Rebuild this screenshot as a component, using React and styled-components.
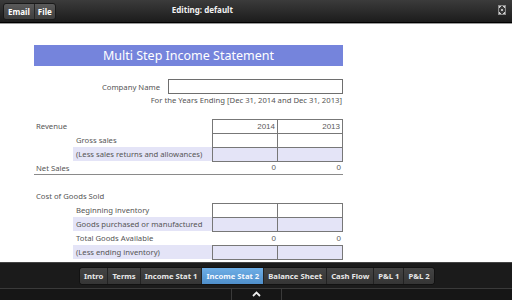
import styled, { createGlobalStyle } from 'styled-components';

const Global = createGlobalStyle`
  html, body {
    margin: 0;
    padding: 0;
    background: #fff;
  }
  body {
    font-family: "Noto Sans", "Open Sans", sans-serif;
  }
`;

const Screen = styled.div`
  width: 512px;
  height: 300px;
  display: flex;
  flex-direction: column;
  overflow: hidden;
`;

const TopBar = styled.header`
  height: 22px;
  flex-shrink: 0;
  display: flex;
  align-items: center;
  padding: 0 3px;
  background: linear-gradient(#3b3b3b, #1c1c1c);
  border-bottom: 1px solid #000;
  box-shadow: 0 1px 0 #9a9a9a;
`;

const ButtonGroup = styled.div`
  display: flex;
  height: 15px;
  margin-top: 1px;
  border-radius: 3px;
  overflow: hidden;
  background: linear-gradient(#5a5a5a, #3e3e3e);
  border: 1px solid #1a1a1a;
`;

const BarButton = styled.span`
  display: flex;
  align-items: center;
  padding: 0 ${(p) => p.$pad}px;
  color: #fff;
  font-size: 8px;
  font-weight: 700;
  & + & {
    border-left: 1px solid #262626;
  }
`;

const Editing = styled.div`
  margin-left: 116px;
  color: #f2f2f2;
  font-size: 8px;
  font-weight: 700;
  margin-top: -4px;
  flex: 1;
`;

const FullIcon = styled.svg`
  width: 8px;
  height: 10px;
  margin-right: 3px;
  margin-top: -3px;
`;

const Content = styled.main`
  flex: 1;
  min-height: 0;
  overflow: hidden;
  margin-top: 1px;
  background: #fff;
  padding: 21px 0 0 34px;
  color: #555;
  font-size: 7.7px;
`;

const Sheet = styled.div`
  width: 309px;
`;

const Title = styled.h1`
  margin: 0;
  height: 21px;
  background: #7584dc;
  color: #fff;
  font-size: 12.5px;
  font-weight: 400;
  display: flex;
  align-items: center;
  justify-content: center;
`;

const CompanyRow = styled.div`
  display: flex;
  justify-content: flex-end;
  align-items: center;
  margin-top: 13px;
  gap: 8px;
`;

const Input = styled.div`
  width: 173px;
  height: 13px;
  border: 1px solid #6e6e6e;
`;

const Period = styled.div`
  text-align: right;
  padding-right: 1px;
  line-height: 12px;
`;

const Grid = styled.div`
  margin-top: 13px;
  display: grid;
  grid-template-columns: 39px 140px 65px 65px;
  grid-auto-rows: 14px;
`;

const Label = styled.div`
  grid-column: ${(p) => (p.$indent ? '2' : '1 / 3')};
  display: flex;
  align-items: center;
  padding-left: ${(p) => (p.$indent ? 3 : 2)}px;
  background: ${(p) => (p.$shade ? '#e4e4f7' : 'transparent')};
  border-bottom: ${(p) => (p.$line ? '1px solid #8a8a8a' : 'none')};
  white-space: nowrap;
`;

const Cell = styled.div`
  display: flex;
  align-items: center;
  justify-content: flex-end;
  padding-right: 2px;
  font-family: "Liberation Sans", Arial, sans-serif;
  font-size: 8px;
  color: #5a5a5a;
  background: ${(p) => (p.$shade ? '#e4e4f7' : 'transparent')};
  border: ${(p) => (p.$boxed ? '1px solid #777' : 'none')};
  border-bottom: ${(p) => (p.$line ? '1px solid #8a8a8a' : p.$boxed ? '1px solid #777' : 'none')};
  margin: ${(p) => (p.$boxed ? '0 0 -1px -1px' : '0')};
`;

const BottomBar = styled.footer`
  height: 37px;
  flex-shrink: 0;
  background: #1b1b1b;
  border-top: 1px solid #444;
  display: flex;
  flex-direction: column;
`;

const TabRow = styled.nav`
  height: 25px;
  flex-shrink: 0;
  display: flex;
  align-items: center;
  padding-left: 80px;
  border-bottom: 1px solid #3a3a3a;
`;

const Tabs = styled.div`
  display: flex;
  height: 16px;
  border-radius: 3px;
  overflow: hidden;
  background: #3a3a3a;
  box-shadow: 0 0 0 1px #121212;
`;

const Tab = styled.span`
  display: flex;
  align-items: center;
  padding: 0 ${(p) => p.$pad}px;
  font-size: 7.7px;
  font-weight: 700;
  color: ${(p) => (p.$active ? '#f4f8ff' : '#e8e8e8')};
  background: ${(p) =>
    p.$active ? 'linear-gradient(#6eaee6, #4f8fcb)' : 'linear-gradient(#444, #353535)'};
  & + & {
    border-left: 1px solid #222;
  }
`;

const Handle = styled.div`
  flex: 1;
  display: flex;
  justify-content: center;
  background: #161616;
`;

const HandleCell = styled.div`
  width: 49px;
  border-left: 1px solid #3a3a3a;
  border-right: 1px solid #3a3a3a;
  display: flex;
  justify-content: center;
  padding-top: 2px;
`;

const tabs = [
  ['Intro', 4],
  ['Terms', 4],
  ['Income Stat 1', 4],
  ['Income Stat 2', 4, true],
  ['Balance Sheet', 4],
  ['Cash Flow', 4],
  ['P&L 1', 4],
  ['P&L 2', 4],
];

const rows = [
  { label: 'Revenue', cells: ['2014', '2013'], boxed: true },
  { label: 'Gross sales', indent: true, cells: ['', ''], boxed: true },
  { label: '(Less sales returns and allowances)', indent: true, shade: true, cells: ['', ''], boxed: true },
  { label: 'Net Sales', cells: ['0', '0'], line: true },
  { label: '', cells: ['', ''] },
  { label: 'Cost of Goods Sold', cells: ['', ''] },
  { label: 'Beginning inventory', indent: true, cells: ['', ''], boxed: true },
  { label: 'Goods purchased or manufactured', indent: true, shade: true, cells: ['', ''], boxed: true },
  { label: 'Total Goods Available', indent: true, cells: ['0', '0'] },
  { label: '(Less ending inventory)', indent: true, shade: true, cells: ['', ''], boxed: true },
];

export default function App() {
  return (
    <Screen>
      <Global />
      <TopBar>
        <ButtonGroup>
          <BarButton $pad={4}>Email</BarButton>
          <BarButton $pad={3}>File</BarButton>
        </ButtonGroup>
        <Editing>Editing: default</Editing>
        <FullIcon viewBox="0 0 8 10">
          <rect x="0" y="0" width="8" height="10" fill="#8a8a8a" />
          <rect x="1" y="1" width="6" height="8" fill="#3a3a3a" />
          <path d="M1 1h2v1H2v1H1zM7 1H5v1h1v1h1zM1 9h2V8H2V7H1zM7 9H5V8h1V7h1z" fill="#d0d0d0" />
          <rect x="3" y="4" width="2" height="2" fill="#bbb" />
        </FullIcon>
      </TopBar>
      <Content>
        <Sheet>
          <Title>Multi Step Income Statement</Title>
          <CompanyRow>
            <span>Company Name</span>
            <Input />
          </CompanyRow>
          <Period>For the Years Ending [Dec 31, 2014 and Dec 31, 2013]</Period>
          <Grid>
            {rows.map((r, i) => [
              r.indent && <div key={`i${i}`} />,
              <Label key={`l${i}`} $indent={r.indent} $shade={r.shade} $line={r.line}>
                {r.label}
              </Label>,
              ...r.cells.map((c, j) => (
                <Cell key={`c${i}${j}`} $shade={r.shade} $boxed={r.boxed} $line={r.line}>
                  {c}
                </Cell>
              )),
            ])}
          </Grid>
        </Sheet>
      </Content>
      <BottomBar>
        <TabRow>
          <Tabs>
            {tabs.map(([name, pad, active]) => (
              <Tab key={name} $pad={pad} $active={active}>
                {name}
              </Tab>
            ))}
          </Tabs>
        </TabRow>
        <Handle>
          <HandleCell>
            <svg width="9" height="6" viewBox="0 0 9 6">
              <path d="M1 5 L4.5 1.5 L8 5" stroke="#eee" strokeWidth="1.8" fill="none" />
            </svg>
          </HandleCell>
        </Handle>
      </BottomBar>
    </Screen>
  );
}
